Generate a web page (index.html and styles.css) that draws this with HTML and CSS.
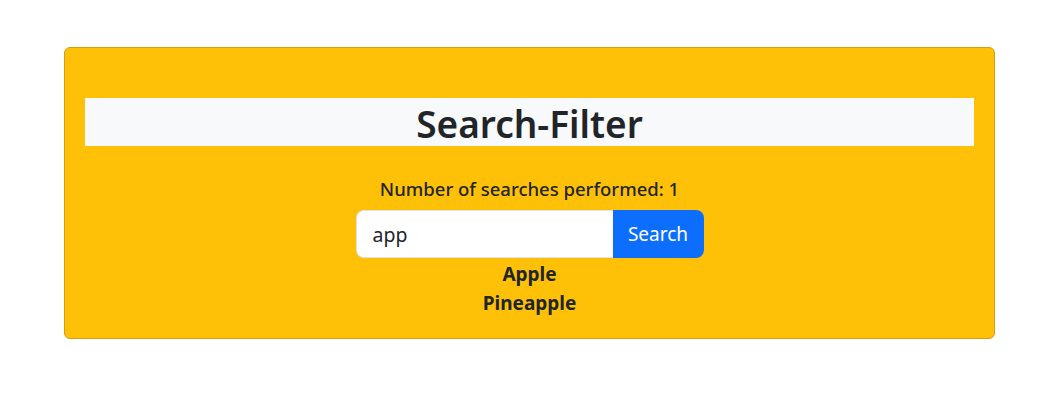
FILE: index.html
```html
<!DOCTYPE html>
<html lang="en">
<head>
<meta charset="utf-8">
<title>Search-Filter</title>
<link rel="stylesheet" href="styles.css">
</head>
<body>
<main class="page">
  <section class="card">
    <h1 class="title">Search-Filter</h1>
    <p class="counter">Number of searches performed: 1</p>
    <form class="search">
      <input class="search-input" type="text" value="app">
      <button class="search-btn" type="button">Search</button>
    </form>
    <ul class="results">
      <li>Apple</li>
      <li>Pineapple</li>
    </ul>
  </section>
</main>
</body>
</html>
```
FILE: styles.css
```css
* { box-sizing: border-box; }
html, body { margin: 0; padding: 0; background: #fff; }
body {
  font-family: "Noto Sans", "Open Sans", "Liberation Sans", sans-serif;
  color: #212529;
}
.page {
  padding: 47px 0 0 64px;
}
.card {
  width: 931px;
  background: #ffc107;
  border: 1px solid #d4a00a;
  border-radius: 6px;
  padding: 50px 20px 20px;
  display: flex;
  flex-direction: column;
  align-items: center;
}
.title {
  align-self: stretch;
  margin: 0;
  background: #f8f9fa;
  height: 48px;
  padding-top: 3px;
  line-height: 45px;
  font-size: 37px;
  font-weight: 600;
  text-align: center;
}
.counter {
  margin: 28px 0 6px;
  font-size: 18.5px;
  line-height: 30px;
  font-weight: 500;
}
.search {
  display: flex;
  margin: 0;
}
.search-input {
  width: 257px;
  height: 48px;
  border: 1px solid #dee2e6;
  border-right: none;
  border-radius: 8px 0 0 8px;
  padding: 0 16px;
  font-family: inherit;
  font-size: 19.5px;
  color: #212529;
  background: #fff;
  outline: none;
}
.search-btn {
  width: 91px;
  height: 48px;
  border: none;
  border-radius: 0 8px 8px 0;
  background: #0d6efd;
  color: #fff;
  font-family: inherit;
  font-size: 19px;
  padding: 0;
}
.results {
  list-style: none;
  margin: 2px 0 0;
  padding: 0;
  text-align: center;
}
.results li {
  font-size: 19px;
  line-height: 29px;
  font-weight: 700;
}
```
